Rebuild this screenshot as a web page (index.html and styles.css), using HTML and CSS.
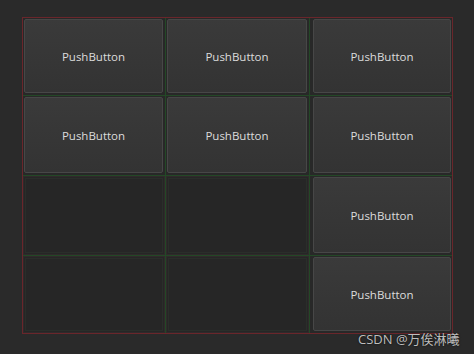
FILE: index.html
```html
<!DOCTYPE html>
<html lang="en">
<head>
    <meta charset="UTF-8">
    <title>Grid Layout</title>
    <link rel="stylesheet" href="styles.css">
</head>
<body>
    <!-- Layout frame -->
    <div class="frame">
        <div class="cell"><button class="push">PushButton</button></div>
        <div class="cell"><button class="push">PushButton</button></div>
        <div class="cell last-col"><button class="push">PushButton</button></div>

        <div class="cell"><button class="push">PushButton</button></div>
        <div class="cell"><button class="push">PushButton</button></div>
        <div class="cell last-col"><button class="push">PushButton</button></div>

        <div class="cell empty"></div>
        <div class="cell empty"></div>
        <div class="cell last-col"><button class="push">PushButton</button></div>

        <div class="cell empty last-row"></div>
        <div class="cell empty last-row"></div>
        <div class="cell last-col last-row"><button class="push">PushButton</button></div>
    </div>

    <!-- Watermark -->
    <div class="watermark">CSDN @万俟淋曦</div>
</body>
</html>
```

FILE: styles.css
```css
/* General Styles */
body {
    margin: 0;
    padding: 17px 0 0 22px;
    width: 474px;
    height: 354px;
    box-sizing: border-box;
    background-color: #2a2a2a;
    font-family: "Open Sans", "DejaVu Sans", sans-serif;
    overflow: hidden;
    position: relative;
}
.frame {
    width: 431px;
    height: 317px;
    box-sizing: border-box;
    border: 1px solid #6a262b;
    display: grid;
    grid-template-columns: 143px 144px 1fr;
    grid-template-rows: 78px 80px 80px 1fr;
    background: #282828;
}
.cell {
    border-right: 1px solid #234826;
    border-bottom: 1px solid #234826;
    padding: 1px 2px 2px 1px;
    display: flex;
}
.cell.last-col {
    border-right: none;
    padding-left: 3px;
    padding-right: 1px;
}
.cell.last-row {
    border-bottom: none;
}
.cell.empty {
    background: #262626;
    box-shadow: inset 0 0 0 1px #302a2b, inset 0 0 0 2px #262626, inset 0 0 0 3px #2a2e2a;
}
.push {
    flex: 1;
    margin: 0;
    border: 1px solid #474747;
    border-radius: 2px;
    background: linear-gradient(#3a3a3a, #333333);
    color: #dcdcdc;
    font-family: "Open Sans", "DejaVu Sans", sans-serif;
    font-size: 11.5px;
    padding: 0;
}
.watermark {
    position: absolute;
    left: 358px;
    top: 329px;
    font-size: 13px;
    color: #d8d8d8;
    font-family: "Open Sans", "Noto Sans CJK SC", sans-serif;
    text-shadow: 0 0 2px #000;
    opacity: 0.85;
}
```
